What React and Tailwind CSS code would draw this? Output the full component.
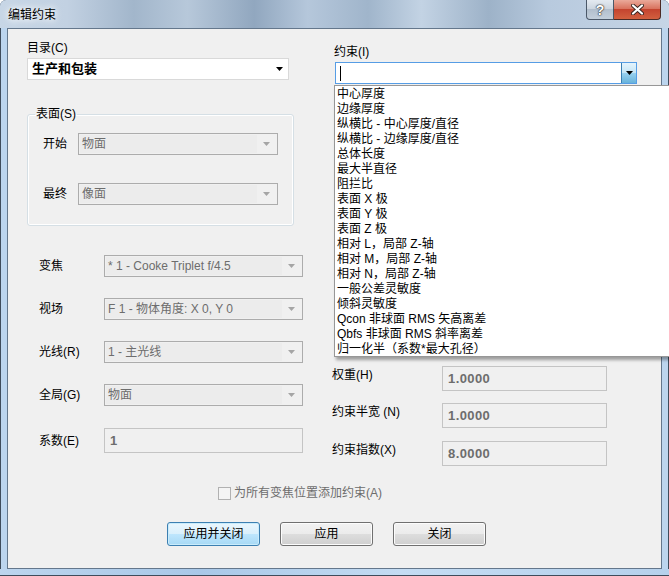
import React from 'react';

const constraintItems = [
  '中心厚度',
  '边缘厚度',
  '纵横比 - 中心厚度/直径',
  '纵横比 - 边缘厚度/直径',
  '总体长度',
  '最大半直径',
  '阻拦比',
  '表面 X 极',
  '表面 Y 极',
  '表面 Z 极',
  '相对 L，局部 Z-轴',
  '相对 M，局部 Z-轴',
  '相对 N，局部 Z-轴',
  '一般公差灵敏度',
  '倾斜灵敏度',
  'Qcon 非球面 RMS 矢高离差',
  'Qbfs 非球面 RMS 斜率离差',
  '归一化半（系数*最大孔径）',
];

const leftRows = [
  { label: '变焦', value: '*  1 - Cooke Triplet f/4.5' },
  { label: '视场', value: 'F 1 - 物体角度: X 0, Y 0' },
  { label: '光线(R)', value: '1 - 主光线' },
  { label: '全局(G)', value: '物面' },
];

const rightRows = [
  { label: '权重(H)', value: '1.0000', mt: 'mt-[282px]' },
  { label: '约束半宽 (N)', value: '1.0000', mt: 'mt-[12px]' },
  { label: '约束指数(X)', value: '8.0000', mt: 'mt-[13px]' },
];

const Tri = ({ color = '#000' }) => (
  <svg width="7" height="4" viewBox="0 0 7 4">
    <polygon points="0,0 7,0 3.5,4" fill={color} />
  </svg>
);

// greyed-out combo, the way Win7 paints a disabled dropdown
const DisabledCombo = ({ text, w = 'w-[199px]' }) => (
  <div className={`flex h-[22px] ${w} items-stretch border border-[#acacac] bg-[#f0f0f0] p-px`}>
    <div className="flex flex-1 items-center bg-[#ececec] pl-[2px] text-[12px] leading-4 text-[#6d6d6d] whitespace-nowrap">
      {text}
    </div>
    <div className="flex w-[19px] items-center justify-center">
      <Tri color="#a5a5a5" />
    </div>
  </div>
);

const ReadBox = ({ value, w }) => (
  <div className={`flex h-[25px] ${w} items-center border border-[#c4c4c4] bg-[#f0f0f0] pl-[5px] text-[13px] font-bold tracking-[0.4px] text-[#6d6d6d]`}>
    {value}
  </div>
);

const Button = ({ children, primary }) => (
  <button
    className={
      primary
        ? 'h-[24px] w-[93px] rounded-[3px] border border-[#3c7fb1] bg-[linear-gradient(#eaf6fd_0%,#d9f0fc_50%,#bee6fd_51%,#a7d9f5_100%)] text-[12px] text-black shadow-[inset_0_0_0_1px_#c9ecfc]'
        : 'h-[24px] w-[93px] rounded-[3px] border border-[#707070] bg-[linear-gradient(#f2f2f2_0%,#ebebeb_50%,#dddddd_51%,#cfcfcf_100%)] text-[12px] text-black shadow-[inset_0_0_0_1px_#fcfcfc]'
    }
  >
    {children}
  </button>
);

export default function App() {
  return (
    <div className="relative flex h-[576px] w-[669px] flex-col overflow-hidden rounded-t-[6px] bg-[#bcd5ee] shadow-[inset_0_0_0_1px_#3f4c5b] [font-family:'Liberation_Sans','Noto_Sans_CJK_SC',sans-serif] text-black">
      {/* aero title bar */}
      <div className="flex h-[28px] shrink-0 items-start bg-[linear-gradient(90deg,#c7d6e6_0%,#c2d1e2_10%,#a2b6cb_20%,#b7c8da_28%,#91a7bf_38%,#b5c7db_46%,#a0b5cb_55%,#c3d3e4_63%,#9db2c8_73%,#b8cade_82%,#c6d5e6_100%)]">
        <div className="pl-[8px] pt-[7px] text-[12px] leading-4 text-black [text-shadow:0_0_6px_#ffffff,0_0_10px_#ffffff]">
          编辑约束
        </div>
        <div className="ml-auto mr-[8px] flex">
          <div className="flex h-[20px] w-[28px] items-center justify-center rounded-bl-[4px] border border-t-0 border-[#4b5868] bg-[linear-gradient(#e4eaf1_0%,#cdd6e0_45%,#b2bfcd_50%,#c3cfdb_100%)]">
            <span className="text-[14px] font-bold leading-none text-white [text-shadow:0_0_1px_#333,0_0_1px_#333,0_0_2px_#333]">?</span>
          </div>
          <div className="flex h-[20px] w-[47px] items-center justify-center rounded-br-[4px] border border-l-0 border-t-0 border-[#4b2a24] bg-[linear-gradient(#eaa99a_0%,#d9735f_45%,#c4442f_50%,#d2603f_100%)]">
            <svg width="13" height="11" viewBox="0 0 13 11">
              <path d="M2 1.5 L11 9.5 M11 1.5 L2 9.5" stroke="#3a2520" strokeWidth="4" strokeLinecap="round" />
              <path d="M2 1.5 L11 9.5 M11 1.5 L2 9.5" stroke="#ffffff" strokeWidth="2.2" strokeLinecap="round" />
            </svg>
          </div>
        </div>
      </div>

      {/* client area */}
      <div className="relative mx-[7px] h-[541px] shrink-0 border border-[#64778c] bg-[#f0f0f0]">
        <div className="flex">
          {/* left column */}
          <div className="ml-[19px] flex w-[277px] flex-col">
            <div className="mt-[11px] text-[12px] leading-4">目录(C)</div>
            <div className="mt-[2px] flex h-[22px] w-[262px] items-center border border-[#d9d9d9] bg-white pl-[4px] pr-[5px]">
              <span className="text-[13px] font-bold leading-4">生产和包装</span>
              <span className="ml-auto flex"><Tri /></span>
            </div>

            <fieldset className="mt-[26px] w-[267px] rounded-[3px] border border-[#d5dfe5] pb-[20px] shadow-[inset_0_0_0_1px_#ffffff]">
              <legend className="ml-[7px] px-px text-[12px] leading-4">表面(S)</legend>
              <div className="mt-[11px] flex items-center pl-[15px]">
                <span className="w-[35px] text-[12px] leading-4">开始</span>
                <DisabledCombo text="物面" w="w-[200px]" />
              </div>
              <div className="mt-[28px] flex items-center pl-[15px]">
                <span className="w-[35px] text-[12px] leading-4">最终</span>
                <DisabledCombo text="像面" w="w-[200px]" />
              </div>
            </fieldset>

            <div className="mt-[29px] flex flex-col gap-[21px]">
              {leftRows.map((r) => (
                <div key={r.label} className="flex items-center pl-[12px]">
                  <span className="w-[65px] text-[12px] leading-4">{r.label}</span>
                  <DisabledCombo text={r.value} />
                </div>
              ))}
            </div>
            <div className="mt-[22px] flex items-center pl-[12px]">
              <span className="w-[65px] text-[12px] leading-4">系数(E)</span>
              <ReadBox value="1" w="w-[199px]" />
            </div>
          </div>

          {/* right column */}
          <div className="ml-[28px] flex w-[303px] flex-col">
            <div className="ml-[2px] mt-[15px] text-[12px] leading-4">约束(I)</div>
            <div className="ml-[3px] mt-[2px] flex h-[22px] w-[302px] items-stretch border border-[#569de5] bg-white">
              <div className="flex flex-1 items-center pl-[4px]">
                <div className="h-[15px] w-px bg-black" />
              </div>
              <div className="flex w-[15px] items-center justify-center border-l border-[#3c7fb1] bg-[linear-gradient(#e5f4fc_0%,#c4e5f6_50%,#98d1ef_51%,#68b3db_100%)]">
                <Tri />
              </div>
            </div>

            {rightRows.map((r) => (
              <div key={r.label} className={`${r.mt} flex h-[25px] items-start`}>
                <span className="mt-px w-[110px] text-[12px] leading-4">{r.label}</span>
                <ReadBox value={r.value} w="w-[165px]" />
              </div>
            ))}
          </div>
        </div>

        <div className="ml-[210px] mt-[19px] flex h-[16px] items-center">
          <div className="h-[13px] w-[13px] border border-[#b1b1b1] bg-[#f4f4f4]" />
          <span className="ml-[3px] text-[12px] leading-4 text-[#6d6d6d]">为所有变焦位置添加约束(A)</span>
        </div>

        <div className="ml-[159px] mt-[21px] flex gap-[20px]">
          <Button primary>应用并关闭</Button>
          <Button>应用</Button>
          <Button>关闭</Button>
        </div>

        {/* open dropdown list, runs past the window edge */}
        <div className="absolute left-[326px] top-[56px] h-[272px] w-[360px] border border-[#979797] bg-white pt-px shadow-[2px_3px_3px_rgba(0,0,0,0.35)]">
          {constraintItems.map((t) => (
            <div key={t} className="h-[15px] whitespace-nowrap pl-[2px] text-[12px] leading-[15px]">
              {t}
            </div>
          ))}
        </div>
      </div>

      {/* bottom frame */}
      <div className="flex-1 border-b border-[#3f4c5b] bg-[linear-gradient(90deg,#bcd5ee_0%,#a9c8e8_30%,#c4dcf3_60%,#b6d1ec_100%)]" />
    </div>
  );
}
